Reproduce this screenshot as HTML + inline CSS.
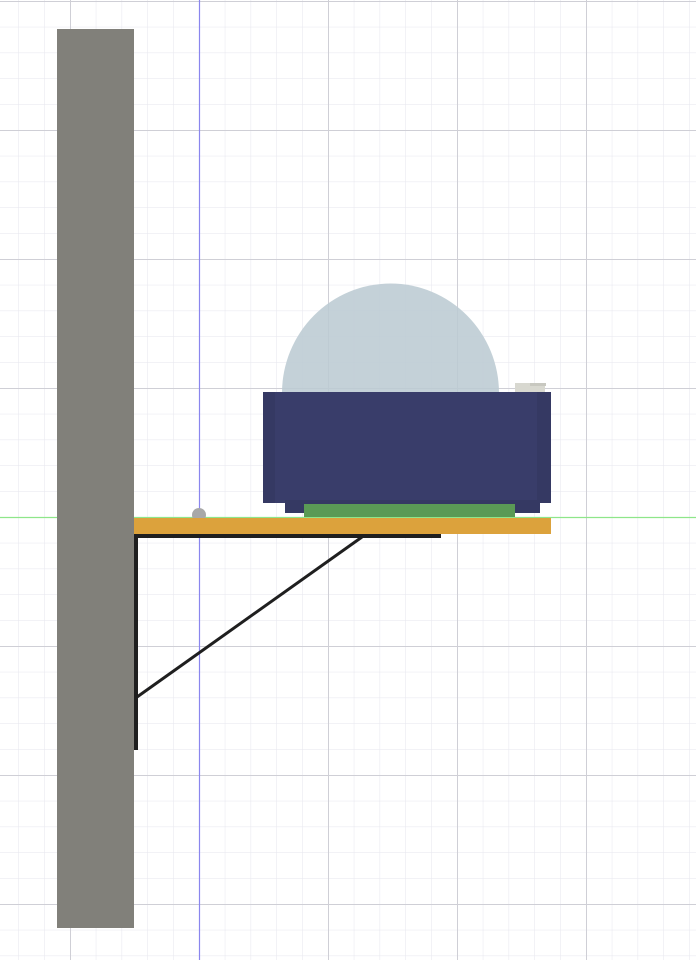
<!DOCTYPE html>
<html><head><meta charset="utf-8"><style>
html,body{margin:0;padding:0;background:#fff;width:696px;height:960px;overflow:hidden}
svg{display:block}
</style></head><body>
<svg width="696" height="960" viewBox="0 0 696 960" xmlns="http://www.w3.org/2000/svg">
<defs>
<pattern id="minor" patternUnits="userSpaceOnUse" x="70" y="517" width="25.8" height="25.8">
<path d="M0 0V25.8M0 0H25.8" stroke="#e6e6ee" stroke-width="1" fill="none"/>
</pattern>
<pattern id="major" patternUnits="userSpaceOnUse" x="70" y="517" width="129" height="129">
<path d="M0.5 0V129M0 0.5H129" stroke="#cfcfd6" stroke-width="1" fill="none"/>
</pattern>
</defs>
<rect width="696" height="960" fill="#fff"/>
<rect width="696" height="960" fill="url(#minor)"/>
<rect width="696" height="960" fill="url(#major)"/>
<line x1="199.5" y1="0" x2="199.5" y2="960" stroke="#8a86ee" stroke-width="1.2"/>
<line x1="0" y1="517.5" x2="696" y2="517.5" stroke="#8ee68a" stroke-width="1.2"/>
<rect x="57" y="29" width="77" height="899" fill="#81807a"/>
<path d="M282 393 A108 109 0 0 1 499 393 Z" fill="#bccbd3" fill-opacity="0.88"/>
<rect x="515" y="383" width="30" height="10" fill="#d8d8d0"/>
<rect x="530" y="383" width="16" height="3" fill="#c8c8c0"/>
<rect x="263" y="392" width="288" height="111" fill="#393d6a"/>
<rect x="263" y="392" width="12" height="111" fill="#353963"/>
<rect x="537" y="392" width="14" height="111" fill="#353963"/>
<rect x="285" y="500" width="255" height="13" fill="#353963"/>
<rect x="304" y="504" width="211" height="13" fill="#5a9a55"/>
<circle cx="199" cy="515" r="7" fill="#a8a8a8"/>
<rect x="134" y="518" width="417" height="16" fill="#dca23c"/>
<rect x="134" y="534" width="307" height="4" fill="#1f1f1f"/>
<rect x="134" y="534" width="4" height="216" fill="#1f1f1f"/>
<line x1="362" y1="537" x2="137" y2="697" stroke="#1f1f1f" stroke-width="3"/>
</svg>
</body></html>
